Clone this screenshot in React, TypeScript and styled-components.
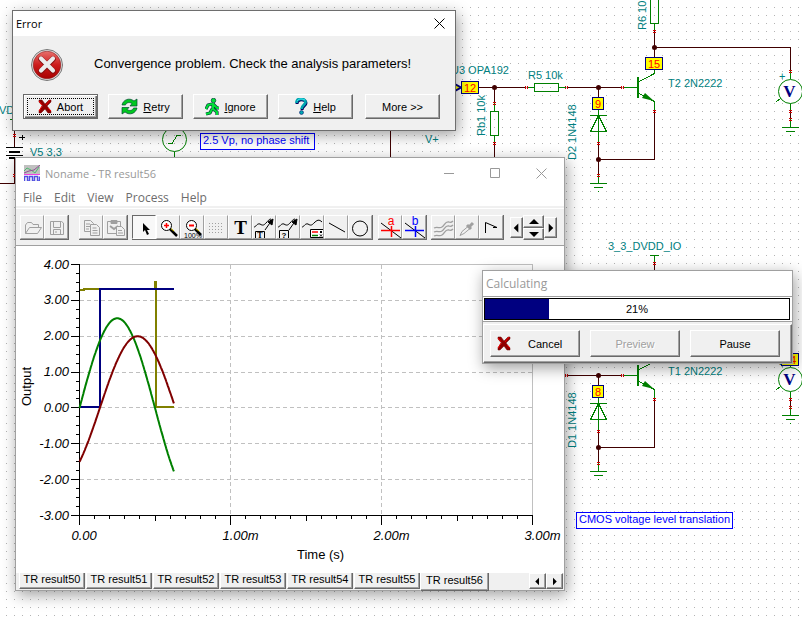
import React from "react";
import styled, { createGlobalStyle, css } from "styled-components";

const GlobalStyle = createGlobalStyle`
  *, *::before, *::after { box-sizing: border-box; }
  body { margin: 0; background: #fff; font-family: "Liberation Sans", Arial, sans-serif; font-size: 11px; color: #000; }
  button { font: inherit; color: inherit; }
`;

const caption = `font-family: "Open Sans", "Noto Sans", sans-serif; font-size: 12px;`;

const Desktop = styled.main`
  position: relative;
  min-height: 100vh;
  overflow: hidden;
  background: #fff;
`;

const SchematicSvg = styled.svg`
  position: absolute;
  inset: 0;
  width: 100%;
  height: 100%;
  font-size: 11px;
`;

/* ---------- Windows ---------- */

const Window = styled.section<{ $x: number; $y: number; $w: number; $edge: string; $bg?: string }>`
  position: absolute;
  left: ${(p) => p.$x}px;
  top: ${(p) => p.$y}px;
  width: min(${(p) => p.$w}px, calc(100vw - ${(p) => p.$x}px));
  border: 1px solid ${(p) => p.$edge};
  background: ${(p) => p.$bg ?? "#f0f0f0"};
  box-shadow: 2px 4px 14px rgba(0, 0, 0, 0.38);
`;

const TitleBar = styled.header<{ $h: number; $dim?: boolean; $pad: number }>`
  ${caption}
  display: flex;
  align-items: center;
  gap: 5px;
  height: ${(p) => p.$h}px;
  padding-left: ${(p) => p.$pad}px;
  background: #fff;
  color: ${(p) => (p.$dim ? "#999" : "#000")};
`;

const TitleText = styled.h1<{ $small?: boolean }>`
  flex: 1;
  margin: 0;
  font-size: ${(p) => (p.$small ? 11 : 12)}px;
  font-weight: 400;
  white-space: nowrap;
`;

const CaptionButton = styled.button<{ $w: number }>`
  display: flex;
  align-items: center;
  justify-content: center;
  width: ${(p) => p.$w}px;
  height: 100%;
  padding: 0;
  border: 0;
  background: none;
`;

const CaptionControls = styled.div`
  display: flex;
  height: 100%;
`;

const raised = css`
  border: 1px solid;
  border-color: #fff #696969 #696969 #fff;
  box-shadow: inset -1px -1px 0 #a0a0a0;
  background: #f0f0f0;
`;

const PushButton = styled.button<{ $w: number; $h: number; $focused?: boolean; $iconLeft?: boolean }>`
  ${raised}
  position: relative;
  display: flex;
  align-items: center;
  justify-content: ${(p) => (p.$iconLeft ? "flex-start" : "center")};
  gap: ${(p) => (p.$iconLeft ? 17 : 5)}px;
  width: ${(p) => p.$w}px;
  height: ${(p) => p.$h}px;
  padding: 0 0 0 ${(p) => (p.$iconLeft ? 6 : 0)}px;
  white-space: nowrap;
  ${(p) =>
    p.$focused &&
    css`
      border-color: #696969;
      box-shadow: inset 1px 1px 0 #fff, inset -1px -1px 0 #696969, inset -2px -2px 0 #a0a0a0;
      &::after {
        content: "";
        position: absolute;
        inset: 3px;
        border: 1px dotted #000;
      }
    `}
  &:disabled {
    color: #a0a0a0;
    text-shadow: 1px 1px 0 #fff;
  }
`;

/* ---------- Error dialog ---------- */

const ErrorMessage = styled.div`
  display: flex;
  align-items: center;
  gap: 30px;
  padding: 12px 0 0 17px;
`;

const MessageText = styled.p`
  margin: 0 0 2px;
  font-size: 13px;
  line-height: 16px;
  white-space: nowrap;
`;

const ErrorButtons = styled.div`
  display: flex;
  gap: 10px;
  padding: 12px 15px 11px 10px;
  & > :last-child {
    margin-left: auto;
  }
`;

/* ---------- Result window ---------- */

const MenuBar = styled.nav`
  ${caption}
  display: flex;
  gap: 12px;
  height: 20px;
  padding-left: 7px;
  border-bottom: 2px solid #f0f0f0;
  line-height: 19px;
`;

const MenuItem = styled.button`
  padding: 0;
  border: 0;
  background: none;
  color: #6d6d6d;
  line-height: 19px;
`;

const Toolbar = styled.div`
  display: flex;
  align-items: flex-start;
  gap: 4px;
  padding: 6px 4px 5px;
  border-top: 1px solid #fff;
  border-bottom: 1px solid #a0a0a0;
  background: #f0f0f0;
`;

const ToolGroup = styled.div<{ $after?: number }>`
  display: flex;
  margin-right: ${(p) => p.$after ?? 0}px;
  border-right: 1px solid #696969;
  border-bottom: 1px solid #696969;
`;

const ToolButton = styled.button<{ $pressed?: boolean }>`
  width: 24px;
  height: 24px;
  padding: 0;
  border: 1px solid;
  border-color: ${(p) => (p.$pressed ? "#696969 #fff #fff #696969" : "#fff #a0a0a0 #a0a0a0 #fff")};
  background: ${(p) => (p.$pressed ? "#f8f8f8" : "#f0f0f0")};
  & > svg {
    display: block;
    margin: -1px;
  }
`;

const Navigator = styled.div`
  display: flex;
  align-items: center;
`;

const NavColumn = styled.div`
  display: flex;
  flex-direction: column;
`;

const NavButton = styled.button<{ $w: number; $h: number }>`
  ${raised}
  display: flex;
  align-items: center;
  justify-content: center;
  width: ${(p) => p.$w}px;
  height: ${(p) => p.$h}px;
  padding: 0;
`;

const PlotSvg = styled.svg`
  display: block;
  width: 100%;
  height: auto;
  font-size: 13px;
`;

const TabStrip = styled.div`
  display: flex;
  align-items: flex-start;
  height: 17px;
  padding: 0 1px 0 3px;
  background: #f0f0f0;
`;

const Tabs = styled.div`
  display: flex;
  flex: 1;
  gap: 1px;
`;

const Tab = styled.button<{ $active?: boolean }>`
  width: ${(p) => (p.$active ? 69 : 66)}px;
  height: ${(p) => (p.$active ? 18 : 16)}px;
  margin-left: ${(p) => (p.$active ? -1 : 0)}px;
  padding: 0;
  border: solid;
  border-width: 0 1px 1px 1px;
  border-color: #696969 #696969 #696969 #fff;
  background: #f0f0f0;
  box-shadow: inset -1px -1px 0 #a0a0a0;
  line-height: 13px;
  padding-bottom: 2px;
  white-space: nowrap;
`;

/* ---------- Progress dialog ---------- */

const ProgressFrame = styled.div`
  padding: 1px 2px 1px 1px;
  border-top: 1px solid #a0a0a0;
  border-bottom: 1px solid #a0a0a0;
  background: #fff;
`;

const ProgressTrack = styled.div`
  display: grid;
  height: 22px;
  border: 1px solid #000;
  background: #fff;
  & > * {
    grid-area: 1 / 1;
  }
`;

const ProgressFill = styled.div`
  background: #000080;
`;

const ProgressLabel = styled.span`
  place-self: center;
`;

const ProgressActions = styled.div`
  ${raised}
  display: flex;
  gap: 10px;
  margin-top: 2px;
  padding: 5px 6px 5px 6px;
`;

/* ---------- Schematic parts ---------- */

const GREEN = "#008000";
const WIRE = "#400000";
const TEAL = "#008080";

const Wire = ({ d }: { d: string }) => <path d={d} fill="none" stroke={WIRE} shapeRendering="crispEdges" />;
const Part = ({ d, fill = "none" }: { d: string; fill?: string }) => (
  <path d={d} fill={fill} stroke={GREEN} shapeRendering="crispEdges" />
);
const Junction = ({ x, y }: { x: number; y: number }) => <circle cx={x + 0.5} cy={y + 0.5} r="2.5" fill={WIRE} />;

const Pin = ({ x, y, flat }: { x: number; y: number; flat?: boolean }) => (
  <path
    d={flat ? `M${x - 1}.5 ${y - 1}v3M${x + 1}.5 ${y - 1}v3` : `M${x - 1} ${y - 1}.5h3M${x - 1} ${y + 1}.5h3`}
    stroke="#d00000"
    shapeRendering="crispEdges"
  />
);

const Label = ({ x, y, children, turned }: { x: number; y: number; children: string; turned?: boolean }) => (
  <text x={x} y={y} fill={TEAL} transform={turned ? `rotate(-90 ${x} ${y})` : undefined}>
    {children}
  </text>
);

const NodeTag = ({ x, y, w, children }: { x: number; y: number; w: number; children: string }) => (
  <g>
    <rect x={x + 0.5} y={y + 0.5} width={w} height="12" fill="#ffff00" stroke="#000080" shapeRendering="crispEdges" />
    <text x={x + w / 2 + 0.5} y={y + 11} fill="#ff0000" textAnchor="middle">
      {children}
    </text>
  </g>
);

const Ground = ({ x, y }: { x: number; y: number }) => (
  <Part d={`M${x - 8} ${y}.5h17M${x - 4} ${y + 4}.5h9M${x} ${y + 8}.5h1`} />
);

const Note = ({ x, y, w, children }: { x: number; y: number; w: number; children: string }) => (
  <g>
    <rect x={x + 0.5} y={y + 0.5} width={w} height="16" fill="#fff" stroke="#0000ff" shapeRendering="crispEdges" />
    <text x={x + 3} y={y + 11} fill="#0000ff">
      {children}
    </text>
  </g>
);

const Stage = ({ dy, tag, diode, transistor }: { dy: number; tag: string; diode: string; transistor: string }) => (
  <g transform={`translate(0 ${dy})`}>
    <Wire d="M567 87.5H622M598.5 87V98M598.5 143V175M598 159.5H654.5V111" />
    <Part d="M623 87.5H638M654.5 69V73.5L639 81.5M639 93.5L654.5 101.5V111" />
    <path d="M637 77h2v21h-2zM642 98l3-5 9 8z" fill={GREEN} />
    <Part d="M598.5 109V143M590 115.5H607M598.5 115.5L590.5 131.5H606.5ZM598.5 175V183" />
    <Ground x={598} y={183} />
    <Junction x={598} y={87} />
    <Junction x={598} y={159} />
    <Pin x={566} y={87} flat />
    <Pin x={622} y={87} flat />
    <Pin x={598} y={143} />
    <Pin x={598} y={175} />
    <Pin x={654} y={111} />
    <NodeTag x={592} y={97} w={11}>{tag}</NodeTag>
    <Label x={576} y={160} turned>{diode}</Label>
    <Label x={668} y={87}>{transistor}</Label>
    <Part d="M790.5 71V79M790.5 103V111M790.5 119V127M776 102L781 98" />
    <Wire d="M790.5 111V119" />
    <circle cx="790.5" cy="91.5" r="12" fill="#fff" stroke={GREEN} />
    <text x="789.5" y="97" fontSize="17" fontWeight="700" fontFamily="Liberation Serif, serif" fill="#000080" textAnchor="middle">V</text>
    <Pin x={790} y={111} />
    <Pin x={790} y={119} />
    <Ground x={790} y={127} />
    <Label x={779} y={80}>+</Label>
  </g>
);

const Schematic = () => (
  <SchematicSvg role="img" aria-label="Circuit schematic">
    <defs>
      <pattern id="grid" width="8" height="8" patternUnits="userSpaceOnUse">
        <rect x="6" y="7" width="1" height="1" fill="#b4b4b4" />
      </pattern>
    </defs>
    <rect width="100%" height="100%" fill="url(#grid)" />

    <Stage dy={0} tag="9" diode="D2 1N4148" transistor="T2 2N2222" />
    <Stage dy={288} tag="8" diode="D1 1N4148" transistor="T1 2N2222" />

    <Part d="M650.5 0V23.5H658.5V0M654.5 24V31" />
    <Wire d="M654.5 31V57M654 47.5H790.5V71" />
    <Junction x={654} y={47} />
    <Pin x={654} y={31} />
    <Pin x={790} y={71} />
    <Label x={646} y={30} turned>R6 10</Label>
    <NodeTag x={645} y={57} w={17}>15</NodeTag>

    <Wire d="M479 87.5H526M494.5 87V103M494.5 143V158" />
    <Part d="M527 87.5H534.5M534.5 83.5H558.5V91.5H534.5ZM559 87.5H566" />
    <Part d="M494.5 103V111.5M490.5 111.5H498.5V135.5H490.5ZM494.5 136V143" />
    <Junction x={494} y={87} />
    <Pin x={526} y={87} flat />
    <Pin x={494} y={103} />
    <Pin x={494} y={143} />
    <Label x={528} y={79}>R5 10k</Label>
    <Label x={485} y={136} turned>Rb1 10k</Label>
    <Label x={451} y={74}>U3 OPA192</Label>
    <path d="M453 83L461 87.5L453 92Z" fill="#ffff00" stroke="#000080" strokeWidth="2" />
    <NodeTag x={461} y={81} w={17}>12</NodeTag>
    <Label x={425} y={143}>V+</Label>
    <Wire d="M390.5 130V158" />

    <Label x={608} y={250}>3_3_DVDD_IO</Label>
    <Part d="M650 255.5H659M654.5 255V263" />
    <Wire d="M654.5 263V272" />
    <Pin x={654} y={263} />
    <NodeTag x={781} y={353} w={17}>14</NodeTag>

    <Note x={200} y={133} w={114}>2.5 Vp, no phase shift</Note>
    <Note x={576} y={512} w={156}>CMOS voltage level translation</Note>
    <circle cx="174.5" cy="139.5" r="12" fill="none" stroke={GREEN} />
    <Part d="M168 143.5H172L177 135.5H181M174.5 152V158" />

    <Label x={-1} y={114}>VDD</Label>
    <Part d="M10 119.5H14" />
    <Wire d="M14.5 130V147M14.5 158V183.5H0" />
    <path d="M6 147.5H23M6 155.5H23M19 137.5H25M22.5 135V140" stroke="#000" shapeRendering="crispEdges" />
    <path d="M9 152H20M9 158H20" stroke="#000" strokeWidth="2" shapeRendering="crispEdges" />
    <Pin x={14} y={135} />
    <Pin x={14} y={175} />
    <Label x={30} y={156}>V5 3,3</Label>
  </SchematicSvg>
);

/* ---------- Dialog icons ---------- */

const ErrorIcon = () => (
  <svg width="34" height="34" viewBox="0 0 34 34" aria-hidden="true">
    <defs>
      <linearGradient id="err" x1="0" y1="0" x2="0" y2="1">
        <stop offset="0" stopColor="#e8706c" />
        <stop offset="0.5" stopColor="#cc1c1c" />
        <stop offset="1" stopColor="#a80000" />
      </linearGradient>
    </defs>
    <circle cx="17" cy="17" r="15.5" fill="#e4e4e4" stroke="#777" />
    <circle cx="17" cy="17" r="13.8" fill="url(#err)" stroke="#8a2020" strokeWidth=".6" />
    <path d="M11 11l12 12M23 11L11 23" stroke="#8a1010" strokeWidth="5.5" strokeLinecap="round" />
    <path d="M11 10.500l12 12M23 10.500l-12 12" stroke="#ececec" strokeWidth="4.200" strokeLinecap="round" />
  </svg>
);

const CrossIcon = () => (
  <svg width="14" height="15" viewBox="0 0 14 15" aria-hidden="true">
    <path d="M1 1h3l3 4 4-4h2v2L9 7l4 5v2h-3l-3-4-4 4H1v-2l3.500-5L1 3z" fill="#900000" stroke="#700000" strokeWidth=".5" />
    <path d="M1 2l3 4M8 6l4-5M1 12l3-5M10 9l3 3" stroke="#f00000" />
  </svg>
);

const RetryIcon = () => (
  <svg width="17" height="17" viewBox="0 0 17 17" aria-hidden="true">
    <path d="M1 7c1-5 7-8 12-4l3-2v7H9l2-2.500C8 3.500 5 5 4.500 7z" fill="#00c820" stroke="#004830" strokeWidth=".7" />
    <path d="M16 10c-1 5-7 8-12 4l-3 2V9.500h7L6 11.500c3 2 6 .5 6.500-1.500z" fill="#00c820" stroke="#004830" strokeWidth=".7" />
  </svg>
);

const RunnerIcon = () => (
  <svg width="14" height="18" viewBox="0 0 14 18" aria-hidden="true">
    <g fill="none" stroke="#003838" strokeWidth="3.200" strokeLinejoin="round">
      <path d="M8 5v6l4 3v3M7 11l-2 4-4 1M8 6l4 4h2M7 6L3 7l-2 4" />
    </g>
    <circle cx="8.500" cy="2.500" r="2.300" fill="#00e038" stroke="#003838" strokeWidth=".7" />
    <path d="M8 5v6l4 3v3M7 11l-2 4-4 1M8 6l4 4h2M7 6L3 7l-2 4" fill="none" stroke="#00e038" strokeWidth="2" />
  </svg>
);

const HelpIcon = () => (
  <svg width="13" height="17" viewBox="0 0 13 17" aria-hidden="true">
    <path d="M2 6c0-6 9-5 9-1 0 3-4 3-4 7" fill="none" stroke="#000060" strokeWidth="3" />
    <path d="M1.500 5c0-6 9-5 9-1 0 3-4 3-4 7" fill="none" stroke="#00a4b0" strokeWidth="2.800" />
    <path d="M2 3c2-3 6-2 8-1" fill="none" stroke="#40e8f0" />
    <circle cx="6.500" cy="14.500" r="2" fill="#00a4b0" stroke="#000060" strokeWidth=".5" />
  </svg>
);

const CloseGlyph = ({ color }: { color: string }) => (
  <svg width="11" height="11" viewBox="0 0 11 11" aria-hidden="true">
    <path d="M.5.5l10 10M10.500.5l-10 10" stroke={color} />
  </svg>
);

const MinimizeGlyph = () => (
  <svg width="11" height="11" viewBox="0 0 11 11" aria-hidden="true">
    <path d="M0 5.500h10" stroke="#999" />
  </svg>
);

const MaximizeGlyph = () => (
  <svg width="11" height="11" viewBox="0 0 11 11" aria-hidden="true">
    <path d="M.5.5h9v9h-9z" fill="none" stroke="#999" />
  </svg>
);

const AppIcon = () => (
  <svg width="16" height="16" viewBox="0 0 16 16" aria-hidden="true">
    <path d="M0 0h16v10H0z" fill="#c0c0c0" />
    <path d="M0 6l3-3 4 2 4 3 4-6" fill="none" stroke="#50b870" />
    <path d="M0 8l5-2 5-1 6-5" fill="none" stroke="#905090" />
    <path d="M0 9.500h16" stroke="#f040e0" />
    <path d="M.5 16v-4.500h3V16h2v-4.500h3V16h2v-4.500h3V16h2v-4.500" fill="none" stroke="#5050e0" strokeWidth="1.500" />
  </svg>
);

/* ---------- Toolbar icons ---------- */

const GRAY = "#a0a0a0";
const wave = "M2 12c2 0 3-4 6-3 3 2 4 1 6-1s3-4 5-4";

const toolIcons: Record<string, React.ReactNode> = {
  Open: (
    <g fill="none" stroke={GRAY}>
      <path d="M5.500 18.500V10l2-2.500h4l1.500 2h5.500v3" />
      <path d="M5.500 18.500l4-6h12l-4 6z" />
    </g>
  ),
  Save: (
    <g fill="none" stroke={GRAY}>
      <path d="M6.500 6.500h11l2 1.500v11.500h-13z" />
      <path d="M9.500 6.500v6h7v-6M9.500 19v-4.500h7V19M11 17h2" />
    </g>
  ),
  Copy: (
    <g fill="#f0f0f0" stroke={GRAY}>
      <path d="M5.500 5.500h6l3 3v8h-9z" />
      <path d="M7 9h4M7 11.500h4M7 14h3" />
      <path d="M11.500 9.500h6l3 3v8h-9z" />
      <path d="M13.500 13h4M13.500 15.500h5M13.500 18h5" />
    </g>
  ),
  Paste: (
    <g fill="#f0f0f0" stroke={GRAY}>
      <path d="M4.500 6.500h13v12h-13z" />
      <path d="M8 8.500V5.500h6v3z" fill={GRAY} />
      <path d="M7 11l4 3 4-3" strokeWidth="2" />
      <path d="M13.500 11.500h5l3 3v6h-8z" />
      <path d="M15 15.500h4M15 18h5" />
    </g>
  ),
  Pointer: <path d="M11 8v9l2-2 2 5 2-1-2-4h3z" fill="#000" />,
  "Zoom in": (
    <g fill="none">
      <path d="M14 14l7 7" stroke="#000" strokeWidth="2.500" />
      <path d="M14 13l4 3" stroke="#d8c800" />
      <circle cx="10.500" cy="10.500" r="5" fill="#fff" stroke="#000" />
      <path d="M8 10.500h5M10.500 8v5" stroke="#f00" strokeWidth="1.500" />
    </g>
  ),
  "Zoom 100%": (
    <g fill="none">
      <path d="M15 14l6 6" stroke="#000" strokeWidth="2.500" />
      <path d="M15 13l4 3" stroke="#d8c800" />
      <circle cx="11.500" cy="10.500" r="5" fill="#fff" stroke="#000" />
      <path d="M9 10.500h5" stroke="#f00" strokeWidth="2" />
      <text x="4" y="23" fontSize="7" fill="#000">100%</text>
    </g>
  ),
  Grid: (
    <path d="M5 8.500h15M5 11.500h15M5 14.500h15M5 17.500h15" stroke={GRAY} strokeDasharray="1 2" shapeRendering="crispEdges" />
  ),
  Text: (
    <text x="12.500" y="19" fontSize="19" fontWeight="700" textAnchor="middle" fontFamily="Liberation Serif, serif">T</text>
  ),
  "Curve label": (
    <g fill="none" stroke="#000">
      <path d={wave} />
      <path d="M13 15l7-10" />
      <path d="M21 4l-1 6-4-3z" fill="#000" />
      <path d="M3.500 23v-6.500h9V23" fill="#f0f0f0" />
      <text x="8" y="23" fontSize="8" fontWeight="700" fontFamily="Liberation Serif, serif" fill="#000" stroke="none" textAnchor="middle">T</text>
    </g>
  ),
  "Curve query": (
    <g fill="none" stroke="#000">
      <path d={wave} />
      <path d="M13 15l7-10" />
      <path d="M21 4l-1 6-4-3z" fill="#000" />
      <path d="M3.500 23v-7.500h9V23" fill="#f0f0f0" />
      <text x="8" y="23" fontSize="8" fontWeight="700" fill="#000" stroke="none" textAnchor="middle">?</text>
    </g>
  ),
  Legend: (
    <g fill="none" stroke="#000">
      <path d="M2 12c2 0 3-4 6-3 3 2 4 1 6-1 3-3 5-4 8-1" />
      <path d="M23 14.500H10.500v8H23" fill="#fff" />
      <path d="M12 17h6" stroke="#f00" strokeWidth="1.500" />
      <path d="M12 20.500h6" stroke={GREEN} strokeWidth="1.500" />
      <path d="M20 16l2 2M22 16l-2 2M20 19.500l2 2M22 19.500l-2 2" />
    </g>
  ),
  Line: <path d="M5 8l16 9" stroke="#000" />,
  Circle: <circle cx="12" cy="13.500" r="7.500" fill="none" stroke="#000" />,
  "Cursor a": (
    <g>
      <path d="M3 8l20 15" stroke="#000" />
      <path d="M3 15.500h19M13.500 11v11" stroke="#f00" strokeWidth="1.500" />
      <text x="13" y="10" fontSize="12" fill="#f00" textAnchor="middle">a</text>
    </g>
  ),
  "Cursor b": (
    <g>
      <path d="M3 8l20 15" stroke="#000" />
      <path d="M3 15.500h19M13.500 11v11" stroke="#00f" strokeWidth="1.500" />
      <text x="13" y="10" fontSize="12" fill="#00f" textAnchor="middle">b</text>
    </g>
  ),
  "Curve set": (
    <path
      d="M3 13c4-2 5 1 8-1s3-6 7-5c2 1 3 0 4-1M3 17c4-2 5 1 8-1s3-6 7-5c2 1 3 0 4-1M3 21c4-2 5 1 8-1s3-6 7-5c2 1 3 0 4-1"
      fill="none"
      stroke={GRAY}
      strokeWidth="1.300"
    />
  ),
  Picker: (
    <g fill="none" stroke={GRAY}>
      <path d="M5 20.500l2-4 6-5 2 2-6 5z" />
      <path d="M12 10l4 4M14 12l4-4" strokeWidth="3" />
    </g>
  ),
  Marker: <path d="M6.500 18V7.500L18 12.500h-4" fill="none" stroke="#000" />,
};

const toolGroups: { tools: string[]; after?: number }[] = [
  { tools: ["Open", "Save"], after: 6 },
  { tools: ["Copy", "Paste"] },
  {
    tools: ["Pointer", "Zoom in", "Zoom 100%", "Grid", "Text", "Curve label", "Curve query", "Legend", "Line", "Circle"],
    after: 1,
  },
  { tools: ["Cursor a", "Cursor b"] },
  { tools: ["Curve set", "Picker", "Marker"], after: 2 },
];

const arrows = {
  left: "M8 1v10L3 6z",
  right: "M4 1v10l5-5z",
  up: "M1 8h10L6 3z",
  down: "M1 4h10L6 9z",
};

const Arrow = ({ dir, size = 12 }: { dir: keyof typeof arrows; size?: number }) => (
  <svg width={size} height={size} viewBox="0 0 12 12" aria-hidden="true">
    <path d={arrows[dir]} />
  </svg>
);

/* ---------- Plot ---------- */

const LEFT = 63.5;
const TOP = 18.5;
const RIGHT = 516.5;
const BOTTOM = 269.5;
const xAt = (ms: number) => LEFT + ms * 151;
const yAt = (v: number) => TOP + ((4 - v) * (BOTTOM - TOP)) / 7;
const snap = (n: number) => Math.floor(n) + 0.5;

const sine = (amp: number, shift: number) => {
  const pts: string[] = [];
  for (let i = 0; i <= 125; i++) {
    const t = i / 200;
    pts.push(`${xAt(t).toFixed(1)},${yAt(amp * Math.sin(2 * Math.PI * (t - shift))).toFixed(1)}`);
  }
  return pts.join(" ");
};

const Plot = () => {
  const volts = [4, 3, 2, 1, 0, -1, -2, -3];
  const minorY = Array.from({ length: 29 }, (_, i) => 4 - i / 4);
  const minorX = Array.from({ length: 31 }, (_, i) => i);
  const inner = volts.slice(1, -1);
  return (
    <PlotSvg viewBox="0 0 548 327" role="img" aria-label="Output against time">
      <rect width="548" height="327" fill="#fff" />
      <g shapeRendering="crispEdges" fill="none">
        <g stroke="#c0c0c0">
          <path d={`M${LEFT} ${TOP}H${RIGHT}V${BOTTOM}`} />
          {inner.map((v) => (
            <path key={v} d={`M${LEFT} ${snap(yAt(v))}H${RIGHT}`} strokeDasharray="4 3" />
          ))}
          {[1, 2].map((m) => (
            <path key={m} d={`M${xAt(m)} ${TOP}V${BOTTOM}`} strokeDasharray="4 3" />
          ))}
        </g>
        <g stroke="#000">
          <path d={`M${LEFT} ${TOP}V${BOTTOM}H${RIGHT}`} />
          {minorY.map((v) => (
            <path key={v} d={`M${LEFT} ${snap(yAt(v))}h${Number.isInteger(v) ? -9 : -4}`} />
          ))}
          {minorX.map((i) => (
            <path key={i} d={`M${snap(LEFT + i * 15.1)} ${BOTTOM}v${i % 10 === 0 ? 9 : i % 5 === 0 ? 5 : 3}`} />
          ))}
        </g>
      </g>
      <g fill="none" strokeWidth="2">
        <path d="M64 44H68V43H140V161H158" stroke="#808000" />
        <path d="M139.500 35V44" stroke="#808000" strokeWidth="3" />
        <path d="M64 161H84V43H158" stroke="#000080" />
        <polyline points={sine(2.5, 0)} stroke="#008000" />
        <polyline points={sine(2, 0.135)} stroke="#800000" />
      </g>
      <g fontStyle="italic">
        {volts.map((v) => (
          <text key={v} x="53" y={Math.round(yAt(v) + 4)} textAnchor="end">
            {v.toFixed(2)}
          </text>
        ))}
        {["0.00", "1.00m", "2.00m", "3.00m"].map((s, i) => (
          <text key={s} x={LEFT - 8 + i * 151} y="294">
            {s}
          </text>
        ))}
      </g>
      <text x="281" y="313">Time (s)</text>
      <text x="15" y="160" transform="rotate(-90 15 160)">Output</text>
    </PlotSvg>
  );
};

const tabs = [50, 51, 52, 53, 54, 55, 56];
const percent = 21;

const ResultWindow = () => (
  <Window $x={15} $y={157} $w={550} $edge="#a0a0a0" $bg="#fff" aria-label="Result diagram">
    <TitleBar $h={30} $pad={8} $dim>
      <AppIcon />
      <TitleText $small>Noname - TR result56</TitleText>
      <CaptionControls>
        <CaptionButton $w={46} aria-label="Minimize"><MinimizeGlyph /></CaptionButton>
        <CaptionButton $w={46} aria-label="Maximize"><MaximizeGlyph /></CaptionButton>
        <CaptionButton $w={46} aria-label="Close"><CloseGlyph color="#999" /></CaptionButton>
      </CaptionControls>
    </TitleBar>
    <MenuBar>
      {["File", "Edit", "View", "Process", "Help"].map((m) => (
        <MenuItem key={m}>{m}</MenuItem>
      ))}
    </MenuBar>
    <Toolbar role="toolbar">
      {toolGroups.map((g) => (
        <ToolGroup key={g.tools[0]} $after={g.after}>
          {g.tools.map((t) => (
            <ToolButton key={t} aria-label={t} $pressed={t === "Pointer"}>
              <svg width="24" height="24" viewBox="0 0 24 24" aria-hidden="true">{toolIcons[t]}</svg>
            </ToolButton>
          ))}
        </ToolGroup>
      ))}
      <Navigator>
        <NavButton $w={13} $h={21} aria-label="Left"><Arrow dir="left" /></NavButton>
        <NavColumn>
          <NavButton $w={21} $h={13} aria-label="Up"><Arrow dir="up" /></NavButton>
          <NavButton $w={21} $h={12} aria-label="Down"><Arrow dir="down" /></NavButton>
        </NavColumn>
        <NavButton $w={13} $h={21} aria-label="Right"><Arrow dir="right" /></NavButton>
      </Navigator>
    </Toolbar>
    <Plot />
    <TabStrip>
      <Tabs role="tablist">
        {tabs.map((n) => (
          <Tab key={n} role="tab" aria-selected={n === 56} $active={n === 56}>
            TR result{n}
          </Tab>
        ))}
      </Tabs>
      <NavButton $w={17} $h={16} aria-label="Scroll tabs left"><Arrow dir="left" size={9} /></NavButton>
      <NavButton $w={17} $h={16} aria-label="Scroll tabs right"><Arrow dir="right" size={9} /></NavButton>
    </TabStrip>
  </Window>
);

const ErrorDialog = () => (
  <Window $x={12} $y={10} $w={444} $edge="#6e6e6e" role="alertdialog" aria-label="Error">
    <TitleBar $h={25} $pad={3}>
      <TitleText $small>Error</TitleText>
      <CaptionButton $w={31} aria-label="Close"><CloseGlyph color="#000" /></CaptionButton>
    </TitleBar>
    <ErrorMessage>
      <ErrorIcon />
      <MessageText>Convergence problem. Check the analysis parameters!</MessageText>
    </ErrorMessage>
    <ErrorButtons>
      <PushButton $w={75} $h={25} $focused><CrossIcon />Abort</PushButton>
      <PushButton $w={75} $h={25}><RetryIcon /><span><u>R</u>etry</span></PushButton>
      <PushButton $w={75} $h={25}><RunnerIcon /><span><u>I</u>gnore</span></PushButton>
      <PushButton $w={75} $h={25}><HelpIcon /><span><u>H</u>elp</span></PushButton>
      <PushButton $w={75} $h={25}>More &gt;&gt;</PushButton>
    </ErrorButtons>
  </Window>
);

const ProgressDialog = () => (
  <Window $x={482} $y={270} $w={311} $edge="#a0a0a0" role="dialog" aria-label="Calculating">
    <TitleBar $h={25} $pad={3} $dim>
      <TitleText>Calculating</TitleText>
    </TitleBar>
    <ProgressFrame>
      <ProgressTrack role="progressbar" aria-label="Calculating" aria-valuenow={percent}>
        <ProgressFill style={{ width: `${percent}%` }} />
        <ProgressLabel>{percent}%</ProgressLabel>
      </ProgressTrack>
    </ProgressFrame>
    <ProgressActions>
      <PushButton $w={90} $h={27} $iconLeft><CrossIcon />Cancel</PushButton>
      <PushButton $w={90} $h={27} disabled>Preview</PushButton>
      <PushButton $w={90} $h={27}>Pause</PushButton>
    </ProgressActions>
  </Window>
);

export default function App() {
  return (
    <Desktop>
      <GlobalStyle />
      <Schematic />
      <ResultWindow />
      <ErrorDialog />
      <ProgressDialog />
    </Desktop>
  );
}
